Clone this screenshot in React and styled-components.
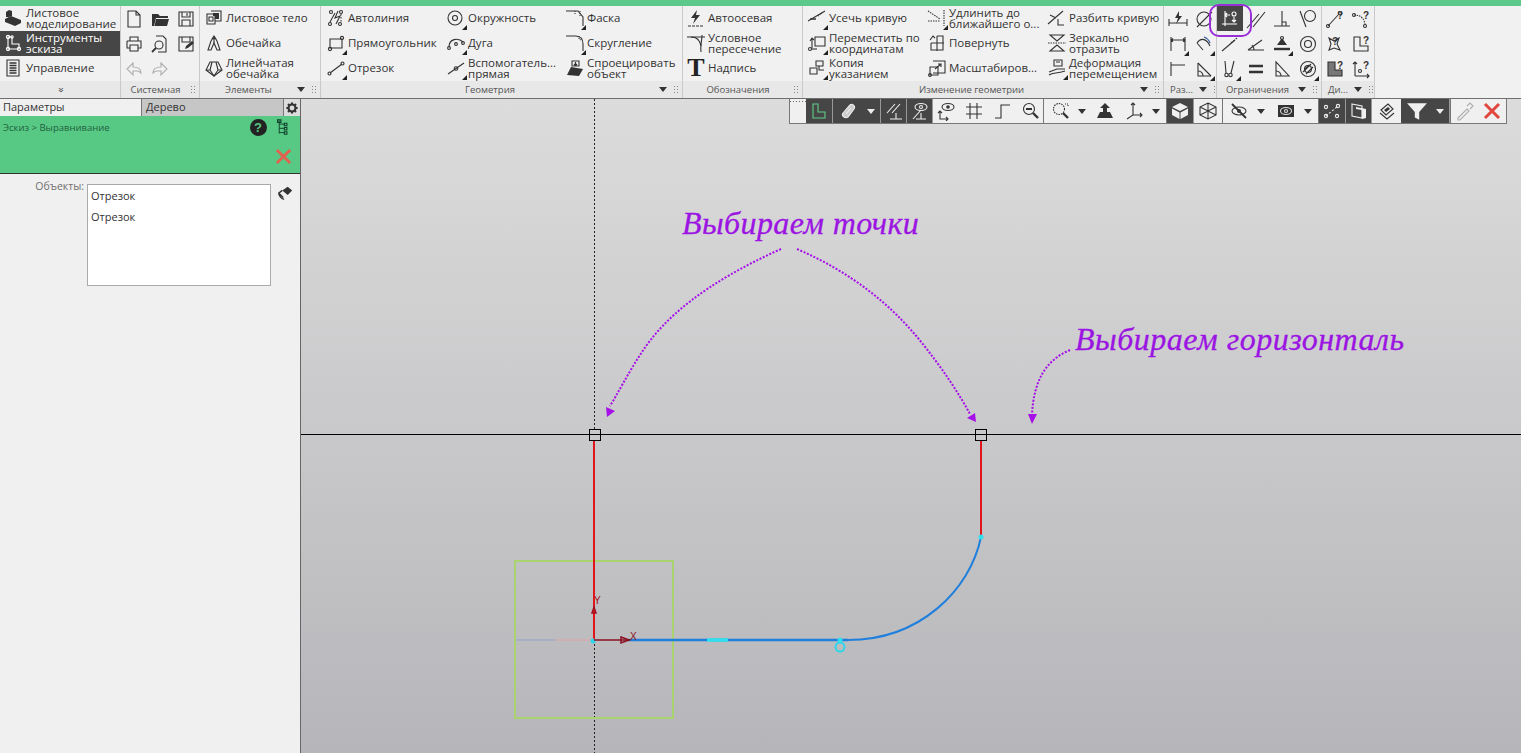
import React from 'react';
import styled, { createGlobalStyle } from 'styled-components';

const Global = createGlobalStyle`
  *, *::before, *::after { box-sizing: border-box; }
  html, body { margin: 0; padding: 0; height: 100%; overflow: hidden; }
  body { font-family: "Open Sans", "Noto Sans", "Liberation Sans", sans-serif; color: #333; }
  #root { height: 100%; }
`;

const ICONS = {
  sheetModel: <><path className="f" d="M2 11l6-3 10 4v3l-6 3-10-4z" /><path className="f" d="M3 9V4l3-2 3 1v5l-3 1z" /></>,
  sketch: <><path d="M5 4v12h11v-5H9V4z" /><circle cx="5" cy="4" r="1.6" /><circle cx="5" cy="16" r="1.6" /><circle cx="16" cy="16" r="1.6" /><circle cx="9" cy="4" r="1.2" /></>,
  manage: <><path d="M4 2h12v16H4z" /><path d="M6.5 5h7M6.5 7.5h7M6.5 10h7M6.5 12.5h7M6.5 15h7" strokeWidth="1.4" /></>,
  page: <path d="M4 2h8l4 4v12H4zM12 2v4h4" />,
  folder: <><path className="f" d="M2 5h6l2 2h8v2H6l-2 8H2z" /><path className="f" d="M6 10h13l-2 7H4.500z" /></>,
  save: <><path d="M3 3h14v14H3z" /><path d="M6 3v5h8V3M6 17v-6h8v6M11 4v3" /></>,
  print: <><path d="M6 7V3h8v4M3 7h14v7h-3M6 14H3V7M6 11h8v6H6z" /></>,
  preview: <><path d="M6 2h7l3 3v13H8" /><circle cx="9" cy="11" r="4" /><path d="M6 14l-4 4" strokeWidth="1.8" /></>,
  saveEdit: <><path d="M3 3h14v14H3z" /><path d="M6 3v5h8V3" /><path className="f" d="M9 15l1-3 6-5 2 2-6 5z" /></>,
  undo: <path d="M9 4L3 10l6 6v-4h4c2 0 3 1 4 2 0-4-2-6-8-6z" opacity=".35" />,
  redo: <path d="M11 4l6 6-6 6v-4H7c-2 0-3 1-4 2 0-4 2-6 8-6z" opacity=".35" />,
  sheetBody: <><path d="M3 6h8v10H3zM7 3h10v10h-6" /><path className="f" d="M9 5h6v6h-4V8H9z" /><path d="M5 9h4v4H5z" /></>,
  shell: <><path d="M7 8l3-5 3 5 3 9h-3l-3-7-3 7H4z" /><path d="M8 5c1 1 3 1 4 0M10 3v7" /></>,
  ruled: <><path d="M6 4h8l4 8-8 6-8-6z" /><path d="M8 4L6 12l4 6 4-6-2-8M2 12h4M14 12h4" /></>,
  autoline: <><path d="M4 14l5-9M12 3l-3 7 5-2-4 8" /><circle cx="5" cy="4" r="1.500" /><circle cx="15" cy="4" r="1.500" /><circle cx="4" cy="16" r="1.500" /><circle cx="14" cy="16" r="1.500" /><path d="M15 6v8" strokeDasharray="1.500 1.500" /></>,
  rect: <><path d="M4 6h12v9H4z" /><circle cx="16" cy="5" r="1.600" /><circle cx="4" cy="16" r="1.600" /></>,
  segment: <><path d="M4 15L16 6" /><circle cx="3.500" cy="15.500" r="1.500" /><circle cx="16.500" cy="5.500" r="1.500" /></>,
  circle: <><circle cx="9" cy="10" r="7" /><circle cx="9" cy="10" r="2.500" /></>,
  arc: <><path d="M3 14C3 6 12 4 17 9" /><circle cx="3" cy="15" r="1.400" /><circle cx="17" cy="10" r="1.400" /><circle cx="10" cy="11" r="1.400" /></>,
  aux: <><path d="M2 16L18 5" /><circle cx="10" cy="10.500" r="1.800" /></>,
  chamfer: <><path d="M1 3h12l5 6v9" /><path d="M10 3v4M15 3v5" strokeDasharray="1 1" /></>,
  fillet: <><path d="M1 3h9c5 0 8 3 8 8v7" /><path d="M14 3v4M17 5l-2 2" strokeDasharray="1 1" /></>,
  project: <><path className="f" d="M2 17l4-8 12 2-4 7z" /><path d="M7 3h7v5H7zM10.500 4v3M9 6l1.500 1.500L12 6" /></>,
  axisAuto: <><path className="f" d="M11 2L5 10h4l-2 6 7-9h-4z" /><path d="M2 18h16" strokeDasharray="3 1" /></>,
  cond: <><path d="M1 4h18M16 2c0 6-2 11-1 17" /><path d="M5 4c5 0 9 3 10 9" /></>,
  trim: <><path d="M1 13L18 3" /><path d="M3 11h6" strokeWidth="1.500" /><path d="M11 8l4-3" strokeDasharray="1 1" /></>,
  move: <><path d="M8 4h10v9H8z" /><path d="M3 8l2-3 2 2M5 5v10" /><circle cx="3" cy="16" r="1.500" /><path d="M4 16h6" /></>,
  copy: <><path d="M9 3h7v5H9zM3 10h7v6H3z" /><path d="M12 8v4h5" /></>,
  extend: <><path d="M17 2v16M1 3l12 8M1 13h12" strokeDasharray="1.500 1" /></>,
  rotate: <><path d="M4 10h13M10 3v15M10 3h6v14H4v-7" /><path d="M3 7l3-4 2 2" /></>,
  scale: <><path d="M6 3h12v12H6" /><path d="M3 9h8v8H3z" /><path d="M8 11l6-5M11 6h3v3" /><circle cx="3" cy="17" r="1.400" /></>,
  split: <><path d="M1 16L16 3M3 7l6 3M11 11v6h6" /></>,
  mirror: <><path d="M3 2h14L10 8zM3 18h14l-7-6z" /><path d="M1 10h18" strokeDasharray="1.500 1" /></>,
  deform: <><path d="M7 2h8v6H7zM2 17c4-3 7-1 16-4M2 14l8-3h8" /><path className="f" d="M9 3.500h4v1H9z" /></>,
  dimAuto: <><path className="f" d="M11 2L7 9h3l-2 6 6-8h-3z" /><path d="M1 10v7M19 10v7M1 14h18" /></>,
  dimOff: <><circle cx="10" cy="10" r="7" /><path d="M3 18L18 3" /></>,
  dimLin: <><path d="M3 3v14M17 3v14M3 6h14M5 4.500L3 6l2 1.500M15 4.500L17 6l-2 1.500" /></>,
  dimRad: <><path d="M3 9c4-6 10-4 13 3M3 9l6 7" /><path d="M10 3c3 1 5 3 6 6" stroke="#2d4d9a" /></>,
  dimBase: <><path d="M3 3v14M3 6h14" /></>,
  dimAng: <><path d="M4 4v13h13" /><path d="M4 4l13 13M4 12c3 0 5 2 5 5" /></>,
  fix: <><path d="M5 2v15M2 15h15M5 6h5M7 4L5 6l2 2M14 8v5M12 11l2 2 2-2" /><circle cx="14" cy="5" r="2" /></>,
  slant: <path d="M1 19L13 5M7 18L19 3" />,
  perp: <><path d="M10 2v15M2 17h16M10 13h4v4" /></>,
  tangent: <><circle cx="12" cy="7" r="5.500" /><path d="M2 2l6 16" /></>,
  lineCol: <><path d="M2 17L15 6" /><path d="M11 9l6-5" strokeDasharray="2 1" /></>,
  angle: <><path d="M2 16h16M2 16L16 6M8 16c0-3-1-3-2-5" /></>,
  anchor: <><path className="f" d="M10 4l5 7H5z" /><path d="M2 15h16" strokeWidth="2.400" /><circle cx="10" cy="4" r="1.500" /></>,
  concentric: <><circle cx="10" cy="10" r="7.500" /><circle cx="10" cy="10" r="3.500" /></>,
  sym: <><path d="M5 2l1 12M14 2l-3 12" /><circle cx="6.500" cy="16" r="1.700" /><circle cx="10.500" cy="16" r="1.700" /></>,
  equal: <path d="M3 7h14M3 13h14" strokeWidth="2.400" />,
  triangle: <><path d="M4 3v14h13z" /><path d="M4 12c3 0 5 2 5 5" /></>,
  hatchCirc: <><circle cx="10" cy="10" r="7.500" /><path d="M5 13l8-8M8 15l7-7M7 10l4-4" /><circle cx="10" cy="10" r="3.500" /></>,
  qPoints: <><path d="M3 17L14 5" /><circle cx="3" cy="17" r="1.500" /><circle cx="15" cy="4" r="1.500" /><text x="12" y="10" className="q">?</text></>,
  qArc: <><path d="M3 6c8 0 11 5 11 11" strokeDasharray="1.500 1" /><circle cx="3" cy="6" r="1.500" /><circle cx="14" cy="17" r="1.500" /><text x="12" y="10" className="q">?</text></>,
  qFig: <><path d="M4 4l5 3 5-3-2 6 3 6-6-2-5 2 2-6z" /><text x="7" y="11" className="q">?</text></>,
  qStep: <><path d="M3 3h6v9h8v5H3z" /><text x="12" y="10" className="q">?</text></>,
  qHatch: <><path d="M3 3h7v8h7v6H3z" fill="#777" /><text x="12" y="10" className="q">?</text></>,
  qAxis: <><path d="M4 17V3M4 17h14M2 5l2-2 2 2M16 15l2 2-2 2" /><circle cx="9" cy="12" r="1.500" /><text x="12" y="10" className="q">?</text></>,
  ortho: <path d="M4 3v14h12v-6H9V3zM4 3h5" />,
  magnet: <><path d="M4 12l7-8c2-2 6 1 4 4l-6 8c-3 2-7-1-5-4z" fill="#ccc" /><path d="M7 13l5-6" /></>,
  paraT: <><path d="M3 12l8-9M8 12l8-9" /><path d="M12 12v6M6 18h12" /></>,
  eyePin: <><ellipse cx="11" cy="6" rx="6" ry="3.500" /><circle cx="11" cy="6" r="1.500" /><path d="M3 18l8-9M11 12v6M6 18h10" /></>,
  eyeAxis: <><ellipse cx="11" cy="6" rx="6" ry="3.500" /><circle className="f" cx="11" cy="6" r="1.800" /><path d="M3 10v8h8M1 12l2-2 2 2M9 16l2 2-2 2" /></>,
  grid: <path d="M6 2v16M13 2v16M2 6h16M2 13h16" />,
  step: <path d="M3 17h6V4h9" />,
  zoomFit: <><circle cx="9" cy="8" r="5.500" /><path className="f" d="M6 7h6v2H6z" /><path d="M13 12l5 5" strokeWidth="2.400" /></>,
  zoomWin: <><circle cx="9" cy="8" r="5.500" strokeDasharray="1.500 1" /><path d="M13 12l5 5" strokeWidth="2.400" /><path d="M15 3h3v3" strokeDasharray="1 1" /></>,
  pan: <><path className="f" d="M2 17l3-6h10l3 6z" /><path className="f" d="M10 2l5 5h-3v6H8V7H5z" /></>,
  axes: <><path d="M9 2v12L3 18M9 14h9M7 4l2-2 2 2M16 12l2 2-2 2" /></>,
  cube: <><path className="f" d="M10 2l8 4-8 4-8-4zM2 7.500l7.500 4V18L2 14zM18 7.500l-7.500 4V18l7.500-4z" /></>,
  wire: <><path d="M10 2l8 4v8l-8 4-8-4V6zM2 6l8 4 8-4M10 10v8M2 14l8-4 8 4M10 2v8" /></>,
  eyeOff: <><ellipse cx="10" cy="10" rx="7" ry="4" /><circle className="f" cx="10" cy="10" r="2" /><path d="M3 3l14 14" strokeWidth="1.800" /></>,
  eyeBox: <><path className="f" d="M2 4h16v12H2z" /><ellipse cx="10" cy="10" rx="5.500" ry="3.500" stroke="#ddd" /><circle cx="10" cy="10" r="1.500" stroke="#ddd" /></>,
  links: <><path d="M4 15L16 5" strokeDasharray="2 2" /><circle cx="4" cy="6" r="1.600" /><circle cx="16" cy="5" r="1.600" /><circle cx="4" cy="15" r="1.600" /><circle cx="15" cy="15" r="1.600" /></>,
  sheets: <><path d="M3 3l10 2v12L3 15z" /><path className="f" d="M7 6l10 2v9l-4 1V9L7 8z" /></>,
  layers: <><path d="M4 9l7-6 5 5-7 6zM3 12l7 6 7-6" /><path className="f" d="M7 9l4-3 2 2-4 3z" /></>,
  funnel: <path className="f" d="M1 3h18l-7 8v7l-4-2v-5z" />,
  pipette: <><path d="M3 17l9-9 2 2-9 9H3zM12 5l3-3 3 3-3 3" opacity=".35" /></>,
  pick: <><path className="f" d="M7 6l6-4 5 4-5 5z" /><path d="M7 6l-4 3c0 3 3 6 6 7M3 9l5 5" strokeWidth="1.500" /></>,
  tree: <><path d="M5 2v15M5 6h6M5 11h6M5 16h6" /><path d="M3 1h4v3H3zM11 5h3v3h-3zM11 10h3v3h-3zM11 15h3v3h-3z" strokeWidth="1.300" /></>,
  gear: <><circle cx="10" cy="10" r="5" strokeWidth="3" /><path d="M10 2v3M10 15v3M2 10h3M15 10h3M4.300 4.300l2 2M13.700 13.700l2 2M4.300 15.700l2-2M13.700 6.300l2-2" strokeWidth="3" /></>,
};

const IconSvg = styled.svg`
  display: block;
  flex: none;
  width: ${p => p.$size || 20}px;
  height: ${p => p.$size || 20}px;
  fill: none;
  stroke: currentColor;
  stroke-width: 1.1;
  .f { fill: currentColor; stroke: none; }
  .q { fill: currentColor; stroke: none; font: bold 10px "Liberation Sans", sans-serif; }
`;

const Icon = ({ name, size }) => (
  <IconSvg viewBox="0 0 20 20" $size={size}>{ICONS[name]}</IconSvg>
);

const Page = styled.div`
  height: 100vh;
  display: flex;
  flex-direction: column;
  overflow: hidden;
  background: #f0f0f0;
`;

const TitleStrip = styled.div`
  height: 6px;
  flex: none;
  background: #5cc98a;
`;

const Ribbon = styled.div`
  position: relative;
  flex: none;
  height: 93px;
  display: flex;
  background: #f1f1f1;
  border-bottom: 1px solid #6f6f6f;
`;

const Group = styled.div`
  width: ${p => p.$w}px;
  flex: none;
  display: flex;
  flex-direction: column;
  border-right: 1px solid #c9c9c9;
`;

const GroupBody = styled.div`
  height: 75px;
  display: flex;
`;

const Caption = styled.div`
  height: 17px;
  display: flex;
  align-items: center;
  gap: 6px;
  padding: 0 3px 0 6px;
  background: #e8e8e8;
  font-size: 9.5px;
  color: #555;
`;

const CaptionText = styled.span`
  flex: 1;
  text-align: center;
  white-space: nowrap;
`;

const Chevrons = styled.span`
  display: block;
  transform: rotate(90deg);
  font-size: 11px;
  line-height: 10px;
`;

const Caret = styled.i`
  flex: none;
  width: 0;
  height: 0;
  border-left: 4px solid transparent;
  border-right: 4px solid transparent;
  border-top: 5px solid ${p => p.$light ? '#eee' : '#333'};
`;

const Grip = styled.i`
  flex: none;
  width: 6px;
  height: 10px;
  background: radial-gradient(circle, #888 0.8px, transparent 1px) 0 0 / 3px 3px;
`;

const ModeList = styled.div`
  display: flex;
  flex-direction: column;
  width: 100%;
`;

const Mode = styled.div`
  height: 25px;
  display: flex;
  align-items: center;
  gap: 3px;
  padding: 0 0 2px 3px;
  font-size: 11.5px;
  line-height: 11px;
  color: ${p => p.$active ? '#fff' : '#333'};
  background: ${p => p.$active ? '#464646' : 'transparent'};
`;

const ToolColumn = styled.div`
  width: ${p => p.$w ? `${p.$w}px` : 'auto'};
  flex: ${p => p.$w ? 'none' : 1};
  padding-left: ${p => p.$pad}px;
  display: flex;
  flex-direction: column;
`;

const Tool = styled.div`
  height: 25px;
  display: flex;
  align-items: center;
  gap: 2px;
  padding-bottom: 2px;
  font-size: 11.5px;
  line-height: 11px;
  white-space: nowrap;
  color: #333;
`;

const IconBox = styled.span`
  position: relative;
  flex: none;
  width: 20px;
  height: 20px;
  display: flex;
  align-items: center;
  justify-content: center;
  ${p => p.$corner && `
    &::after {
      content: '';
      position: absolute;
      right: -1px;
      bottom: -2px;
      border-left: 5px solid transparent;
      border-bottom: 5px solid #222;
    }
  `}
`;

const TextGlyph = styled.span`
  font: bold 26px/20px "Liberation Serif", serif;
  color: #222;
`;

const IconGrid = styled.div`
  display: grid;
  grid-template-columns: repeat(${p => p.$cols}, ${p => p.$cell || 26}px);
  grid-auto-rows: 25px;
  padding-left: ${p => p.$pad}px;
`;

const Cell = styled.div`
  display: flex;
  align-items: center;
  justify-content: center;
  color: ${p => p.$active ? '#fff' : '#333'};
  background: ${p => p.$active ? '#464646' : 'transparent'};
`;

const Highlight = styled.div`
  position: absolute;
  left: 1209px;
  top: -2px;
  width: 43px;
  height: 33px;
  border: 2.5px solid #9a2fd8;
  border-radius: 10px;
  pointer-events: none;
`;

const Workspace = styled.div`
  flex: 1;
  min-height: 0;
  display: flex;
`;

const SidePanel = styled.aside`
  width: 301px;
  flex: none;
  display: flex;
  flex-direction: column;
  background: #f0f0f0;
  border-right: 1px solid #666;
`;

const Tabs = styled.div`
  height: 17px;
  flex: none;
  display: flex;
  font-size: 11px;
  line-height: 16px;
`;

const Tab = styled.div`
  width: ${p => p.$w}px;
  padding-left: ${p => p.$active ? 3 : 4}px;
  background: ${p => p.$active ? '#f0f0f0' : '#c6c6c6'};
  border-left: ${p => p.$active ? 'none' : '1px solid #777'};
  color: #333;
`;

const GearTab = styled.div`
  flex: 1;
  display: flex;
  align-items: center;
  justify-content: center;
  border-left: 1px solid #777;
  background: #dcdcdc;
  color: #333;
`;

const GreenHeader = styled.div`
  height: 58px;
  flex: none;
  display: flex;
  justify-content: space-between;
  padding: 1px 7px 0 3px;
  background: #57c985;
  border-bottom: 1px solid #333;
`;

const Crumb = styled.div`
  padding-top: 4px;
  font-size: 9.5px;
  line-height: 13px;
  color: #1f5f3c;
`;

const HeaderActions = styled.div`
  display: grid;
  grid-template-columns: 20px 20px;
  grid-auto-rows: 20px;
  column-gap: 5px;
  row-gap: 9px;
  justify-items: center;
  align-items: center;
`;

const HelpBadge = styled.span`
  width: 17px;
  height: 17px;
  border-radius: 50%;
  background: #222;
  color: #57c985;
  font: bold 13px/17px "Liberation Sans", sans-serif;
  text-align: center;
`;

const TreeIcon = styled.span`
  color: #12402a;
`;

const CloseMark = styled.span`
  grid-column: 2;
`;

const CrossSvg = styled.svg`
  display: block;
  width: ${p => p.$size}px;
  height: ${p => p.$size}px;
  stroke: ${p => p.$color};
  stroke-width: 3;
  fill: none;
`;

const Cross = ({ size, color }) => (
  <CrossSvg viewBox="0 0 18 18" $size={size} $color={color}><path d="M2 2l14 14M16 2L2 16" /></CrossSvg>
);

const FormRow = styled.div`
  display: flex;
  padding-top: 10px;
`;

const FormLabel = styled.div`
  width: 84px;
  margin-top: -6px;
  text-align: right;
  font-size: 10.5px;
  line-height: 16px;
  color: #707070;
`;

const ListBox = styled.div`
  width: 184px;
  height: 102px;
  margin-left: 3px;
  background: #fff;
  border: 1px solid #aaa;
`;

const ListItem = styled.div`
  height: 21px;
  padding-left: 3px;
  font-size: 11px;
  line-height: 21px;
  color: #333;
`;

const PickButton = styled.div`
  margin: 1px 0 0 5px;
  color: #333;
`;

const Viewport = styled.main`
  position: relative;
  flex: 1;
  overflow: hidden;
  background: linear-gradient(180deg, #dcdcdc 0%, #c9c9cb 50%, #b6b6ba 100%);
`;

const Drawing = styled.svg`
  position: absolute;
  left: 0;
  top: 0;
  width: 1220px;
  height: 654px;
`;

const ViewBar = styled.div`
  position: absolute;
  right: 14px;
  top: 0;
  height: 25px;
  display: flex;
  background: #f0f0f0;
  border: 1px solid #777;
  border-top: none;
  color: #333;
`;

const BarGrip = styled.i`
  width: 16px;
  height: 8px;
  background: radial-gradient(circle, #666 0.8px, transparent 1px) 2px 1px / 3px 3px repeat-x;
`;

const BarSection = styled.div`
  display: flex;
  border-left: ${p => p.$plain ? 'none' : '1px solid #777'};
`;

const BarButton = styled.div`
  width: ${p => p.$w || 27}px;
  display: flex;
  align-items: center;
  justify-content: center;
  gap: 8px;
  background: ${p => p.$dark ? '#464646' : 'transparent'};
  color: ${p => p.$color || (p.$dark ? '#f0f0f0' : '#333')};
  border-right: ${p => p.$dark ? '1px solid #999' : 'none'};
`;

const Note = styled.span`
  position: absolute;
  left: ${p => p.$x}px;
  top: ${p => p.$y}px;
  font: italic 32px/36px "Liberation Serif", serif;
  letter-spacing: ${p => p.$track}px;
  color: #9b14e2;
  white-space: nowrap;
  -webkit-text-stroke: 0.3px #9b14e2;
`;

const geometry = [
  { w: 122, pad: 5, tools: [['autoline', 'Автолиния', 0], ['rect', 'Прямоугольник', 1], ['segment', 'Отрезок', 1]] },
  { w: 119, pad: 3, tools: [['circle', 'Окружность', 1], ['arc', 'Дуга', 1], ['aux', ['Вспомогатель...', 'прямая'], 1]] },
  { pad: 3, tools: [['chamfer', 'Фаска', 1], ['fillet', 'Скругление', 1], ['project', ['Спроецировать', 'объект'], 0]] },
];

const editing = [
  { w: 120, pad: 4, tools: [['trim', 'Усечь кривую', 1], ['move', ['Переместить по', 'координатам'], 1], ['copy', ['Копия', 'указанием'], 1]] },
  { w: 120, pad: 4, tools: [['extend', ['Удлинить до', 'ближайшего о...'], 1], ['rotate', 'Повернуть', 0], ['scale', 'Масштабиров...', 0]] },
  { pad: 4, tools: [['split', 'Разбить кривую', 0], ['mirror', ['Зеркально', 'отразить'], 0], ['deform', ['Деформация', 'перемещением'], 1]] },
];

const Label = ({ text }) => (
  <span>{Array.isArray(text) ? <>{text[0]}<br />{text[1]}</> : text}</span>
);

const ToolItem = ({ icon, text, corner }) => (
  <Tool>
    <IconBox $corner={corner}><Icon name={icon} /></IconBox>
    <Label text={text} />
  </Tool>
);

const Columns = ({ data }) => data.map((col, i) => (
  <ToolColumn key={i} $w={col.w} $pad={col.pad}>
    {col.tools.map(t => <ToolItem key={t[0]} icon={t[0]} text={t[1]} corner={t[2]} />)}
  </ToolColumn>
));

const Icons = ({ names, corners = [], active }) => names.map(n => (
  <Cell key={n} $active={n === active}>
    <IconBox $corner={corners.includes(n)}><Icon name={n} /></IconBox>
  </Cell>
));

const ArrowHead = styled.polygon`
  fill: #a60fe8;
`;

const Dotted = styled.path`
  fill: none;
  stroke: #a60fe8;
  stroke-width: 2;
  stroke-dasharray: 2 1.6;
`;

const App = () => (
  <Page>
    <Global />
    <TitleStrip />
    <Ribbon>
      <Group $w={121}>
        <GroupBody>
          <ModeList>
            <Mode><Icon name="sheetModel" /><Label text={['Листовое', 'моделирование']} /></Mode>
            <Mode $active><Icon name="sketch" /><Label text={['Инструменты', 'эскиза']} /></Mode>
            <Mode><Icon name="manage" /><Label text="Управление" /></Mode>
          </ModeList>
        </GroupBody>
        <Caption><CaptionText><Chevrons>»</Chevrons></CaptionText></Caption>
      </Group>
      <Group $w={79}>
        <GroupBody>
          <IconGrid $cols={3} $pad={0}>
            <Icons names={['page', 'folder', 'save', 'print', 'preview', 'saveEdit', 'undo', 'redo']} />
          </IconGrid>
        </GroupBody>
        <Caption><CaptionText>Системная</CaptionText><Grip /></Caption>
      </Group>
      <Group $w={121}>
        <GroupBody>
          <ToolColumn $pad={4}>
            <ToolItem icon="sheetBody" text="Листовое тело" />
            <ToolItem icon="shell" text="Обечайка" />
            <ToolItem icon="ruled" text={['Линейчатая', 'обечайка']} />
          </ToolColumn>
        </GroupBody>
        <Caption><CaptionText>Элементы</CaptionText><Caret /><Grip /></Caption>
      </Group>
      <Group $w={362}>
        <GroupBody><Columns data={geometry} /></GroupBody>
        <Caption><CaptionText>Геометрия</CaptionText><Caret /><Grip /></Caption>
      </Group>
      <Group $w={120}>
        <GroupBody>
          <ToolColumn $pad={3}>
            <ToolItem icon="axisAuto" text="Автоосевая" />
            <ToolItem icon="cond" text={['Условное', 'пересечение']} />
            <Tool><IconBox><TextGlyph>T</TextGlyph></IconBox><Label text="Надпись" /></Tool>
          </ToolColumn>
        </GroupBody>
        <Caption><CaptionText>Обозначения</CaptionText><Grip /></Caption>
      </Group>
      <Group $w={361}>
        <GroupBody><Columns data={editing} /></GroupBody>
        <Caption><CaptionText>Изменение геометрии</CaptionText><Caret /><Grip /></Caption>
      </Group>
      <Group $w={53}>
        <GroupBody>
          <IconGrid $cols={2} $pad={1}>
            <Icons names={['dimAuto', 'dimOff', 'dimLin', 'dimRad', 'dimBase', 'dimAng']} corners={['dimLin', 'dimRad', 'dimAng']} />
          </IconGrid>
        </GroupBody>
        <Caption><CaptionText>Раз...</CaptionText><Caret /><Grip /></Caption>
      </Group>
      <Group $w={105}>
        <GroupBody>
          <IconGrid $cols={4} $pad={0}>
            <Icons
              names={['fix', 'slant', 'perp', 'tangent', 'lineCol', 'angle', 'anchor', 'concentric', 'sym', 'equal', 'triangle', 'hatchCirc']}
              corners={['anchor', 'sym', 'hatchCirc']}
              active="fix"
            />
          </IconGrid>
        </GroupBody>
        <Caption><CaptionText>Ограничения</CaptionText><Caret /><Grip /></Caption>
      </Group>
      <Group $w={53}>
        <GroupBody>
          <IconGrid $cols={2} $pad={0}>
            <Icons names={['qPoints', 'qArc', 'qFig', 'qStep', 'qHatch', 'qAxis']} />
          </IconGrid>
        </GroupBody>
        <Caption><CaptionText>Ди...</CaptionText><Caret /><Grip /></Caption>
      </Group>
      <Highlight />
    </Ribbon>
    <Workspace>
      <SidePanel>
        <Tabs>
          <Tab $active $w={141}>Параметры</Tab>
          <Tab $w={142}>Дерево</Tab>
          <GearTab><Icon name="gear" size={14} /></GearTab>
        </Tabs>
        <GreenHeader>
          <Crumb>Эскиз &gt; Выравнивание</Crumb>
          <HeaderActions>
            <HelpBadge>?</HelpBadge>
            <TreeIcon><Icon name="tree" size={17} /></TreeIcon>
            <CloseMark><Cross size={17} color="#e2624e" /></CloseMark>
          </HeaderActions>
        </GreenHeader>
        <FormRow>
          <FormLabel>Объекты:</FormLabel>
          <ListBox>
            <ListItem>Отрезок</ListItem>
            <ListItem>Отрезок</ListItem>
          </ListBox>
          <PickButton><Icon name="pick" size={18} /></PickButton>
        </FormRow>
      </SidePanel>
      <Viewport>
        <Drawing viewBox="301 99 1220 654">
          <path d="M594.500 99V430M594.500 640V753" stroke="#222" strokeWidth="1" strokeDasharray="2 2" fill="none" />
          <path d="M301 434.500H1521" stroke="#000" strokeWidth="1" />
          <rect x="515" y="561" width="158" height="157" fill="none" stroke="#a9d36e" strokeWidth="2" />
          <path d="M516 640H555" stroke="#8fa6c8" strokeWidth="1" />
          <path d="M555 640H594" stroke="#e0a0a0" strokeWidth="1" />
          <path d="M594 440V640M981 440V537" stroke="#e0161a" strokeWidth="2" />
          <path d="M628 640H848" stroke="#1f7fdc" strokeWidth="2.400" fill="none" />
          <path d="M848 640C920 640 970 590 981 537" stroke="#1f7fdc" strokeWidth="2" fill="none" />
          <path d="M707 640H728" stroke="#2fe0ee" strokeWidth="3.500" />
          <circle cx="840" cy="647" r="4.500" fill="none" stroke="#2fd5ea" strokeWidth="2" />
          <circle cx="840" cy="640" r="2.500" fill="#2fe0ee" />
          <circle cx="981" cy="537" r="2.500" fill="#2fe0ee" />
          <circle cx="593" cy="641" r="2.500" fill="#2fd5ea" />
          <path d="M594 640H630" stroke="#8a1020" strokeWidth="1.500" />
          <path d="M621 637l8 3-8 3z" fill="none" stroke="#8a1020" strokeWidth="1.500" />
          <path d="M592 613l2-6 2 6z" fill="none" stroke="#a01020" strokeWidth="1.500" />
          <text x="630" y="640" fontFamily="Liberation Sans, sans-serif" fontSize="10" fill="#8a1020">X</text>
          <text x="594" y="604" fontFamily="Liberation Sans, sans-serif" fontSize="10" fill="#a01020">Y</text>
          <rect x="589.500" y="429.500" width="11" height="11" fill="none" stroke="#000" />
          <rect x="975.500" y="429.500" width="11" height="11" fill="none" stroke="#000" />
          <Dotted d="M781 249C705 283 664 318 642 352C628 373 617 395 610 406" />
          <ArrowHead points="606,407 615,411 607,417" />
          <Dotted d="M797 249C850 272 890 303 922 343C942 368 958 392 970 414" />
          <ArrowHead points="967,418 975,413 976,422" />
          <Dotted d="M1070 350C1046 360 1034 380 1032 414" />
          <ArrowHead points="1028,414 1037,414 1032,424" />
        </Drawing>
        <ViewBar>
          <BarGrip />
          <BarSection $plain>
            <BarButton $dark $color="#5fcf8a"><Icon name="ortho" /></BarButton>
            <BarButton $dark $w={48}><Icon name="magnet" /><Caret $light /></BarButton>
            <BarButton $dark $w={26}><Icon name="paraT" /></BarButton>
            <BarButton $dark $w={26}><Icon name="eyePin" /></BarButton>
            <BarButton><Icon name="eyeAxis" /></BarButton>
            <BarButton $w={28}><Icon name="grid" /></BarButton>
            <BarButton $w={28}><Icon name="step" /></BarButton>
            <BarButton><Icon name="zoomFit" /></BarButton>
          </BarSection>
          <BarSection>
            <BarButton $w={48}><Icon name="zoomWin" /><Caret /></BarButton>
            <BarButton $w={26}><Icon name="pan" /></BarButton>
            <BarButton $w={48}><Icon name="axes" /><Caret /></BarButton>
          </BarSection>
          <BarSection>
            <BarButton $dark $w={27}><Icon name="cube" /></BarButton>
            <BarButton $w={28}><Icon name="wire" /></BarButton>
          </BarSection>
          <BarSection>
            <BarButton $w={47}><Icon name="eyeOff" /><Caret /></BarButton>
            <BarButton $w={48}><Icon name="eyeBox" /><Caret /></BarButton>
          </BarSection>
          <BarSection>
            <BarButton $dark $w={27}><Icon name="links" /></BarButton>
            <BarButton $dark $w={26}><Icon name="sheets" /></BarButton>
            <BarButton $w={29}><Icon name="layers" /></BarButton>
            <BarButton $dark $w={49}><Icon name="funnel" size={22} /><Caret $light /></BarButton>
          </BarSection>
          <BarSection>
            <BarButton $w={27}><Icon name="pipette" /></BarButton>
            <BarButton $w={28}><Cross size={18} color="#e2473f" /></BarButton>
          </BarSection>
        </ViewBar>
        <Note $x={381} $y={106} $track={0.4}>Выбираем точки</Note>
        <Note $x={774} $y={222} $track={0.5}>Выбираем горизонталь</Note>
      </Viewport>
    </Workspace>
  </Page>
);

export default App;
